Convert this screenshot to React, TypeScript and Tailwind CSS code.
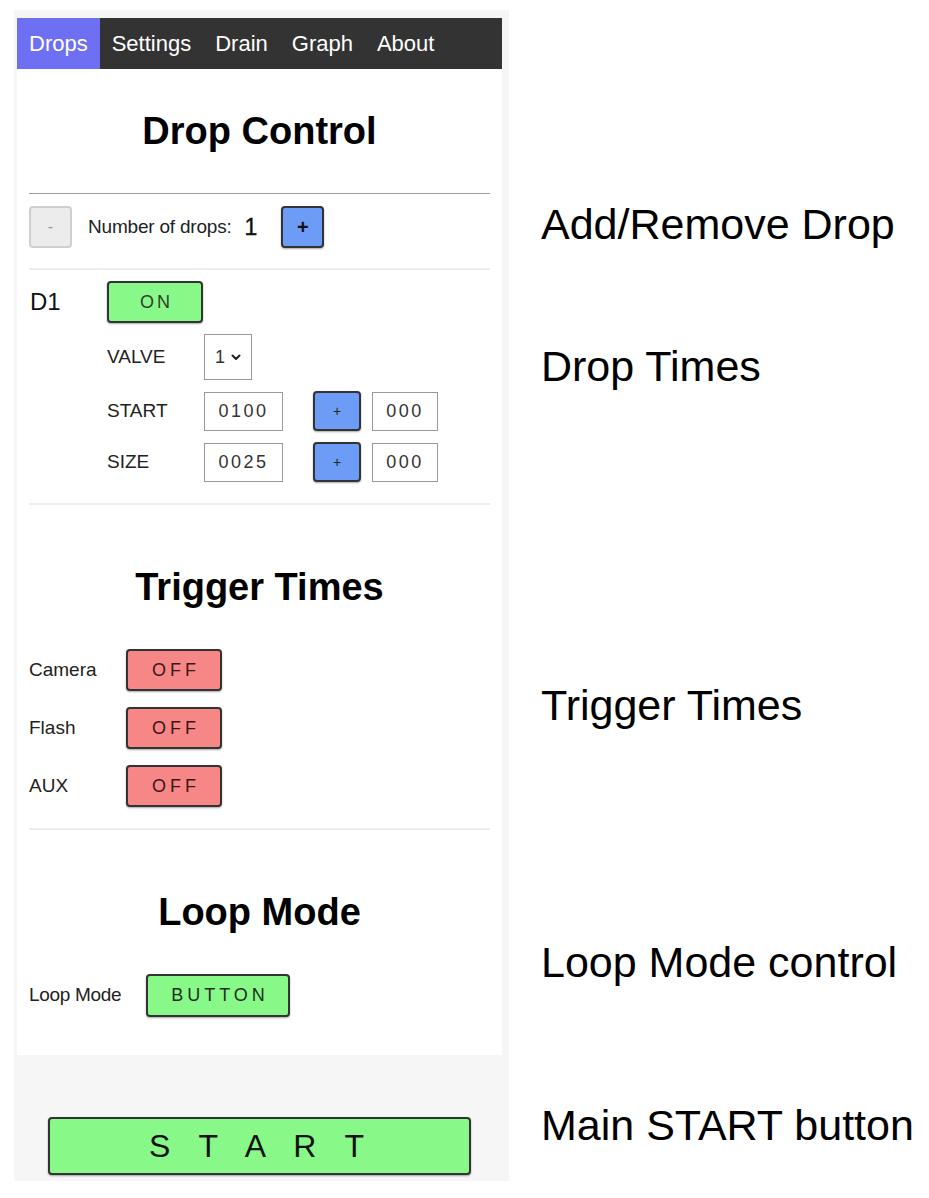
import React from "react";

const btnBase =
  "flex items-center justify-center rounded-[4px] border-2 border-[#333] shadow-[0_1px_2px_rgba(0,0,0,0.35)]";

function Divider({ dark }: { dark?: boolean }) {
  return dark ? (
    <div className="mx-3 h-px bg-[#9c9c9c]" />
  ) : (
    <div className="mx-3 h-[2px] bg-[#ededed]" />
  );
}

function TimeRow({ label, value }: { label: string; value: string }) {
  return (
    <div className="flex items-center">
      <div className="w-[97px] text-[19px] text-[#222]">{label}</div>
      <div className="flex h-[39px] w-[79px] items-center justify-center border border-[#9a9a9a] bg-white text-[18px] tracking-[2.5px] text-[#333]">
        {value}
      </div>
      <button className={`${btnBase} ml-[30px] h-[40px] w-[48px] bg-[#6d9cf6] text-[14px] text-[#222]`}>
        +
      </button>
      <div className="ml-[11px] flex h-[39px] w-[66px] items-center justify-center border border-[#9a9a9a] bg-white text-[18px] tracking-[2.5px] text-[#333]">
        000
      </div>
    </div>
  );
}

function TriggerRow({ label }: { label: string }) {
  return (
    <div className="flex items-center">
      <div className="w-[97px] text-[19px] text-[#222]">{label}</div>
      <button
        className={`${btnBase} h-[42px] w-[96px] bg-[#f78787] text-[18px] tracking-[4px] text-[#3a1616]`}
      >
        <span className="pl-[4px]">OFF</span>
      </button>
    </div>
  );
}

export default function App() {
  const tabs = ["Drops", "Settings", "Drain", "Graph", "About"];
  return (
    <div className="flex min-h-[1198px] bg-white font-['Liberation_Sans',Arial,sans-serif] text-black">
      {/* Phone */}
      <div className="ml-[14px] mt-[10px] h-[1171px] w-[495px] bg-[#f6f6f6]">
        <div className="ml-[3px] mt-[8px] w-[485px] bg-white">
          {/* Nav */}
          <div className="flex h-[51px] bg-[#333333] text-[22px] text-white">
            {tabs.map((t, i) => (
              <div
                key={t}
                className={`flex items-center px-3 ${i === 0 ? "bg-[#6f6ff3]" : ""}`}
              >
                {t}
              </div>
            ))}
          </div>

          {/* Drop Control heading */}
          <div className="flex h-[124px] items-center justify-center text-[38px] font-bold leading-none">
            Drop Control
          </div>
          <Divider dark />

          {/* Number of drops */}
          <div className="flex items-center px-3 pb-[20px] pt-[12px]">
            <button className="flex h-[42px] w-[43px] items-center justify-center rounded-[4px] border-2 border-[#cfcfcf] bg-[#ececec] text-[16px] text-[#999]">
              -
            </button>
            <span className="ml-[16px] text-[19px] tracking-[-0.2px] text-[#222]">
              Number of drops:
            </span>
            <span className="ml-[13px] text-[23px] text-[#111] [-webkit-text-stroke:0.4px_#111]">1</span>
            <button
              className={`${btnBase} ml-[24px] h-[42px] w-[43px] bg-[#6d9cf6] text-[20px] font-bold text-[#111]`}
            >
              +
            </button>
          </div>
          <Divider />

          {/* D1 */}
          <div className="flex flex-col gap-[11px] px-3 pb-[21px] pt-[11px]">
            <div className="flex items-center">
              <div className="w-[78px] pl-[1px] text-[24px] text-[#111]">D1</div>
              <button
                className={`${btnBase} h-[42px] w-[96px] bg-[#88f988] text-[18px] tracking-[3px] text-[#2f3f2f]`}
              >
                <span className="pl-[3px]">ON</span>
              </button>
            </div>
            <div className="flex items-center pl-[78px]">
              <div className="w-[97px] text-[19px] text-[#222]">VALVE</div>
              <div className="flex h-[46px] w-[48px] items-center justify-center gap-[6px] border border-[#9a9a9a] bg-white text-[18px] text-[#333]">
                <span>1</span>
                <svg width="10" height="7" viewBox="0 0 10 7">
                  <path
                    d="M1.5 1.5 L5 5 L8.5 1.5"
                    fill="none"
                    stroke="#222"
                    strokeWidth="2"
                    strokeLinecap="round"
                    strokeLinejoin="round"
                  />
                </svg>
              </div>
            </div>
            <div className="flex flex-col gap-[11px] pl-[78px]">
              <TimeRow label="START" value="0100" />
              <TimeRow label="SIZE" value="0025" />
            </div>
          </div>
          <Divider />

          {/* Trigger Times */}
          <div className="px-3 pb-[21px] pt-[63px]">
            <div className="text-center text-[38px] font-bold leading-[38px]">
              Trigger Times
            </div>
            <div className="mt-[43px] flex flex-col gap-[16px]">
              <TriggerRow label="Camera" />
              <TriggerRow label="Flash" />
              <TriggerRow label="AUX" />
            </div>
          </div>
          <Divider />

          {/* Loop Mode */}
          <div className="px-3 pb-[38px] pt-[63px]">
            <div className="text-center text-[38px] font-bold leading-[38px]">
              Loop Mode
            </div>
            <div className="mt-[43px] flex items-center">
              <div className="w-[117px] text-[19px] tracking-[-0.3px] text-[#222]">
                Loop Mode
              </div>
              <button
                className={`${btnBase} h-[43px] w-[144px] bg-[#88f988] text-[18px] tracking-[4px] text-[#1f2f1f]`}
              >
                <span className="pl-[4px]">BUTTON</span>
              </button>
            </div>
          </div>
        </div>

        {/* START */}
        <div className="pt-[62px]">
          <button
            className={`${btnBase} ml-[34px] h-[58px] w-[423px] bg-[#88f988] text-[32px] tracking-[10px] text-[#111]`}
          >
            <span className="pl-[4px]">S T A R T</span>
          </button>
        </div>
      </div>

      {/* Annotations */}
      <div className="ml-[32px] flex flex-col text-[43px] leading-[43px] text-black">
        <div className="mt-[203px]">Add/Remove Drop</div>
        <div className="mt-[99px]">Drop Times</div>
        <div className="mt-[296px]">Trigger Times</div>
        <div className="mt-[214px]">Loop Mode control</div>
        <div className="mt-[120px]">Main START button</div>
      </div>
    </div>
  );
}
